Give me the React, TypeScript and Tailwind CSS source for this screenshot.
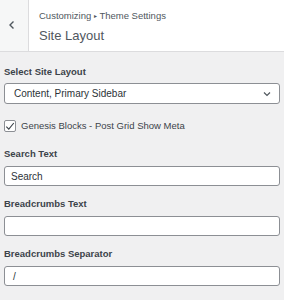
export default function App() {
  const font = "font-['Liberation_Sans',Arial,sans-serif]";
  return (
    <div className={`w-[284px] h-[300px] bg-[#f0f0f1] ${font} overflow-hidden`}>
      {/* header */}
      <div className="flex h-[52px] bg-white border-b border-[#dcdcde]">
        <div className="w-[29px] shrink-0 flex items-center justify-center bg-[#f6f7f7] border-r border-[#dcdcde]">
          <svg width="8" height="10" viewBox="0 0 8 10" className="ml-[-5px] mt-[-1px]">
            <path d="M5.5 1.5 L2 5 L5.5 8.5" fill="none" stroke="#50575e" strokeWidth="1.4" />
          </svg>
        </div>
        <div className="pl-[10px] pt-[10px] flex flex-col">
          <span className="text-[9.5px] leading-[12px] text-[#50575e]">
            Customizing <span className="text-[6px] align-[1px]">▸</span> Theme Settings
          </span>
          <span className="mt-[6px] text-[13px] leading-[16px] text-[#50575e]">Site Layout</span>
        </div>
      </div>

      <div className="px-[4px] flex flex-col">
        <label className="mt-[14px] text-[9.5px] leading-[12px] font-bold text-[#3c434a]">Select Site Layout</label>
        <div className="mt-[5px] h-[21px] flex items-center justify-between bg-white border border-[#8c8f94] rounded-[3px] pl-[9px] pr-[8px]">
          <span className="text-[10px] text-[#2c3338]">Content, Primary Sidebar</span>
          <svg width="8" height="6" viewBox="0 0 8 6">
            <path d="M1 1.5 L4 4.5 L7 1.5" fill="none" stroke="#50575e" strokeWidth="1.2" />
          </svg>
        </div>

        <div className="mt-[16px] h-[12px] flex items-center">
          <div className="w-[12px] h-[12px] bg-white border border-[#8c8f94] rounded-[2px] flex items-center justify-center">
            <svg width="10" height="9" viewBox="0 0 10 9">
              <path d="M1.3 4.6 L3.8 7.2 L8.8 1" fill="none" stroke="#3c434a" strokeWidth="1.1" />
            </svg>
          </div>
          <span className="ml-[5px] text-[9.5px] text-[#3c434a]">Genesis Blocks - Post Grid Show Meta</span>
        </div>

        <label className="mt-[16px] text-[9.5px] leading-[12px] font-bold text-[#3c434a]">Search Text</label>
        <div className="mt-[6px] h-[20px] flex items-center bg-white border border-[#8c8f94] rounded-[3px] px-[6px]">
          <span className="text-[10px] text-[#2c3338]">Search</span>
        </div>

        <label className="mt-[12px] text-[9.5px] leading-[12px] font-bold text-[#3c434a]">Breadcrumbs Text</label>
        <div className="mt-[6px] h-[20px] bg-white border border-[#8c8f94] rounded-[3px]" />

        <label className="mt-[12px] text-[9.5px] leading-[12px] font-bold text-[#3c434a]">Breadcrumbs Separator</label>
        <div className="mt-[6px] h-[20px] flex items-center bg-white border border-[#8c8f94] rounded-[3px] px-[8px]">
          <span className="text-[10px] text-[#2c3338]">/</span>
        </div>
      </div>
    </div>
  );
}
